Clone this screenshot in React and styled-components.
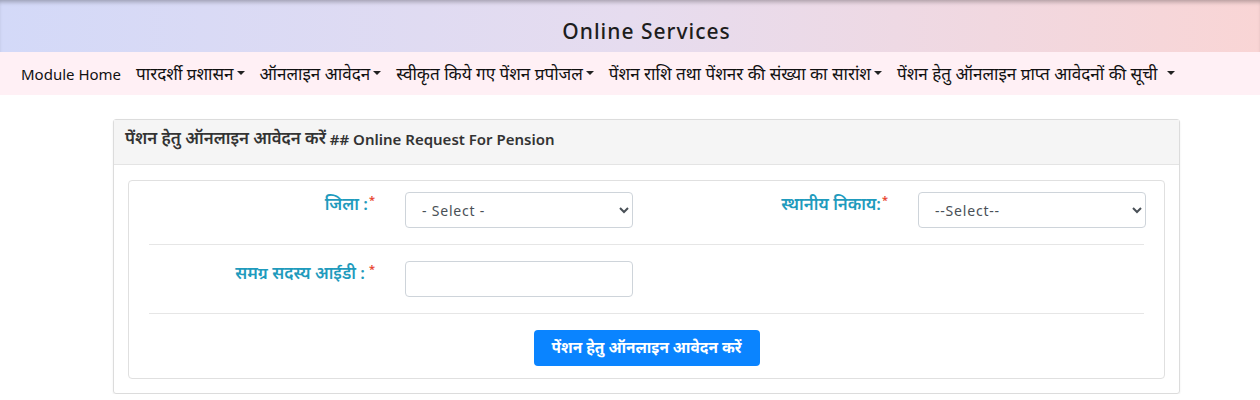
import React from 'react';
import styled, { createGlobalStyle } from 'styled-components';

const GlobalStyle = createGlobalStyle`
  body {
    margin: 0;
    background: #ffffff;
    font-family: "Noto Sans", "DejaVu Sans", sans-serif;
    color: #212529;
  }
`;

// Devanagari runs render narrower than in the original font, so they get a size bump
const Deva = styled.span`
  font-size: ${p => p.$scale || 1.2}em;
  line-height: 1;
`;

const Header = styled.div`
  height: 52px;
  display: flex;
  align-items: center;
  justify-content: center;
  padding-left: 33px;
  box-sizing: border-box;
  background: linear-gradient(90deg, #d3d9f8 0%, #e6dcef 50%, #f9d5d5 100%);
  box-shadow: inset 0 4px 4px -2px rgba(0, 0, 0, 0.28);
`;

const Title = styled.h1`
  margin: 9px 0 0;
  font-size: 21px;
  font-weight: 500;
  letter-spacing: 1px;
  color: #1d1d1d;
`;

const Nav = styled.nav`
  height: 43px;
  display: flex;
  align-items: center;
  gap: 15px;
  padding-left: 21px;
  background: #fff0f5;
`;

const NavItem = styled.span`
  display: flex;
  align-items: center;
  gap: ${p => (p.$wide ? '10px' : '3px')};
  font-size: 14px;
  color: #111;
  white-space: nowrap;
  &::after {
    content: '';
    display: ${p => (p.$caret ? 'block' : 'none')};
    border-top: 4px solid #222;
    border-left: 4px solid transparent;
    border-right: 4px solid transparent;
  }
`;

const Home = styled.span`
  font-size: 15px;
`;

const Main = styled.div`
  padding: 24px 80px 0 113px;
`;

const Card = styled.div`
  width: 1067px;
  box-sizing: border-box;
  border: 1px solid #dcdcdc;
  border-radius: 3px;
  box-shadow: 0 1px 2px rgba(0, 0, 0, 0.08);
`;

const CardHeader = styled.div`
  height: 45px;
  box-sizing: border-box;
  display: flex;
  align-items: center;
  gap: 4px;
  padding: 0 11px 7px;
  background: #f5f5f5;
  border-bottom: 1px solid #e4e4e4;
  font-size: 15px;
  font-weight: 600;
  color: #333;
`;

const CardBody = styled.div`
  padding: 15px 14px 14px;
`;

const Panel = styled.div`
  border: 1px solid #e0e0e0;
  border-radius: 4px;
  padding: 11px 20px 12px;
`;

const FormRow = styled.div`
  display: grid;
  grid-template-columns: 256px 228px 285px 228px;
  align-items: start;
  padding-bottom: 16px;
  margin-bottom: 16px;
  border-bottom: 1px solid #e6e6e6;
`;

const Label = styled.label`
  text-align: right;
  padding: 0 30px 0 0;
  font-size: 14px;
  font-weight: 600;
  color: #1f9bbd;
`;

const Star = styled.sup`
  color: #e8432c;
  font-size: 11px;
  margin-left: ${p => (p.$gap ? '4px' : '1px')};
`;

const Select = styled.select`
  height: 36px;
  padding: 0 8px 0 12px;
  border: 1px solid #ced4da;
  border-radius: 4px;
  background: #fff;
  font-family: inherit;
  font-size: 14px;
  letter-spacing: 0.8px;
  color: #495057;
`;

const Input = styled.input`
  height: 36px;
  box-sizing: border-box;
  border: 1px solid #ced4da;
  border-radius: 4px;
  background: #fff;
`;

const Actions = styled.div`
  display: flex;
  justify-content: center;
`;

const Button = styled.button`
  width: 226px;
  height: 36px;
  padding: 0 0 2px;
  border: none;
  border-radius: 4px;
  background: #0a84ff;
  color: #fff;
  font-family: inherit;
  font-size: 14px;
  font-weight: 700;
`;

const navItems = [
  { text: 'Module Home', latin: true },
  { text: 'पारदर्शी प्रशासन', caret: true },
  { text: 'ऑनलाइन आवेदन', caret: true },
  { text: 'स्वीकृत किये गए पेंशन प्रपोजल', caret: true },
  { text: 'पेंशन राशि तथा पेंशनर की संख्या का सारांश', caret: true },
  { text: 'पेंशन हेतु ऑनलाइन प्राप्त आवेदनों की सूची', caret: true, wide: true }
];

export default function App() {
  return (
    <>
      <GlobalStyle />
      <Header>
        <Title>Online Services</Title>
      </Header>
      <Nav>
        {navItems.map(item => (
          <NavItem key={item.text} $caret={item.caret} $wide={item.wide}>
            {item.latin ? <Home>{item.text}</Home> : <Deva $scale={1.22}>{item.text}</Deva>}
          </NavItem>
        ))}
      </Nav>
      <Main>
        <Card>
          <CardHeader>
            <Deva $scale={1.12}>पेंशन हेतु ऑनलाइन आवेदन करें</Deva> ## Online Request For Pension
          </CardHeader>
          <CardBody>
            <Panel>
              <FormRow>
                <Label>
                  <Deva>जिला :</Deva>
                  <Star>*</Star>
                </Label>
                <Select defaultValue="">
                  <option value="">- Select -</option>
                </Select>
                <Label>
                  <Deva>स्थानीय निकाय:</Deva>
                  <Star>*</Star>
                </Label>
                <Select defaultValue="">
                  <option value="">--Select--</option>
                </Select>
              </FormRow>
              <FormRow>
                <Label>
                  <Deva>समग्र सदस्य आईडी :</Deva>
                  <Star $gap>*</Star>
                </Label>
                <Input type="text" />
              </FormRow>
              <Actions>
                <Button>
                  <Deva $scale={1.1}>पेंशन हेतु ऑनलाइन आवेदन करें</Deva>
                </Button>
              </Actions>
            </Panel>
          </CardBody>
        </Card>
      </Main>
    </>
  );
}
